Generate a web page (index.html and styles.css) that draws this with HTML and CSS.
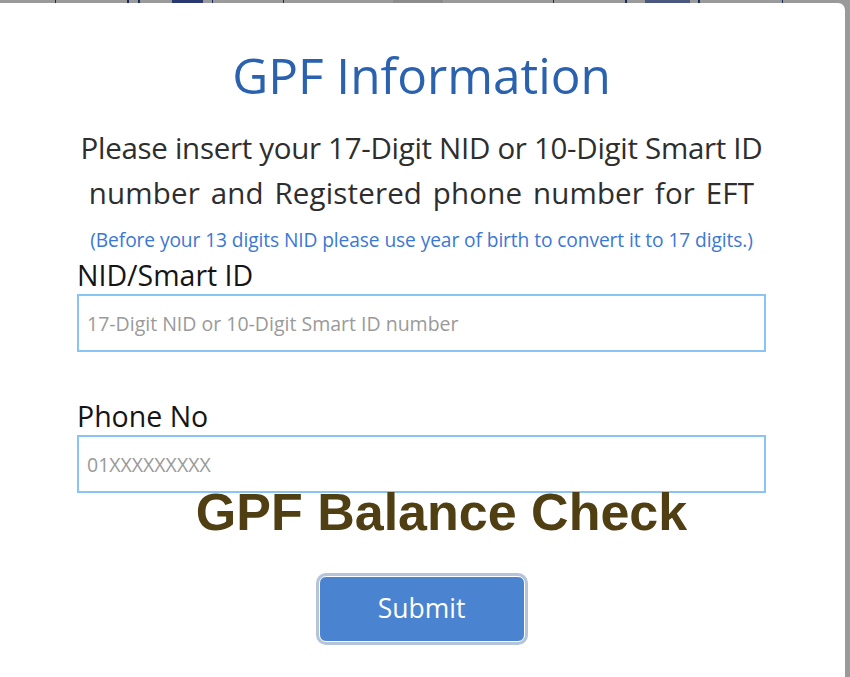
FILE: index.html
```html
<!DOCTYPE html>
<html>
<head>
<meta charset="utf-8">
<link rel="stylesheet" href="styles.css">
</head>
<body>
<div class="backdrop">
  <span class="mark m1"></span><span class="mark m2"></span><span class="mark m3"></span><span class="mark m4"></span><span class="mark m5"></span><span class="mark m6"></span><span class="mark m7"></span><span class="mark m8"></span><span class="mark m9"></span><span class="mark m10"></span><span class="mark m11"></span><span class="shade"></span>
</div>
<div class="modal">
  <h1 class="title">GPF Information</h1>
  <p class="intro">Please insert your 17-Digit NID or 10-Digit Smart ID <span class="intro-line2">number and Registered phone number for EFT</span></p>
  <p class="note">(Before your 13 digits NID please use year of birth to convert it to 17 digits.)</p>
  <label class="label">NID/Smart ID</label>
  <input class="field" type="text" placeholder="17-Digit NID or 10-Digit Smart ID number">
  <label class="label label-phone">Phone No</label>
  <input class="field" type="text" placeholder="01XXXXXXXXX">
  <div class="brand">GPF Balance Check</div>
  <div class="actions">
    <button class="submit">Submit</button>
  </div>
</div>
</body>
</html>
```
FILE: styles.css
```css
* { box-sizing: border-box; }
html, body {
  margin: 0;
  padding: 0;
  height: 677px;
  overflow: hidden;
  background: #9a9a9a;
  font-family: "Open Sans", "Noto Sans", sans-serif;
}
.backdrop {
  position: absolute;
  top: 0; left: 0; right: 0;
  height: 3px;
}
.mark {
  position: absolute;
  top: 0;
  width: 1px;
  height: 3px;
  background: #1b2a5e;
}
.shade {
  position: absolute;
  top: 0;
  left: 393px;
  width: 50px;
  height: 3px;
  background: #8c8c8c;
}
.m1 { left: 55px; }
.m2 { left: 127px; width: 2px; }
.m3 { left: 138px; width: 2px; }
.m4 { left: 172px; width: 31px; background: #2a3a70; }
.m5 { left: 212px; }
.m6 { left: 283px; }
.m7 { left: 553px; }
.m8 { left: 625px; width: 2px; }
.m9 { left: 645px; width: 45px; background: #4a5880; }
.m10 { left: 698px; width: 2px; }
.m11 { left: 782px; }
.modal {
  margin: 3px 5px 0 0;
  height: 674px;
  background: #fff;
  border-radius: 0 7px 0 0;
  padding: 41px 79px 0 77px;
  display: flex;
  flex-direction: column;
}
.title {
  margin: 0;
  text-align: center;
  font-weight: 400;
  font-size: 49.5px;
  line-height: 62px;
  color: #2b62b0;
}
.intro {
  margin: 19px 0 0;
  text-align: center;
  font-size: 29.5px;
  line-height: 45px;
  color: #2e2e2e;
  letter-spacing: -0.3px;
}
.intro-line2 {
  display: block;
  word-spacing: 3px;
  letter-spacing: 0.15px;
}
.note {
  margin: 12px 0 0;
  text-align: center;
  font-size: 19.2px;
  line-height: 26px;
  color: #3b78d4;
  letter-spacing: -0.1px;
}
.label {
  display: block;
  font-size: 28.5px;
  line-height: 36px;
  color: #151515;
  margin-top: 4px;
}
.field {
  display: block;
  width: 100%;
  height: 58px;
  margin: 1px 0 0;
  border: 2px solid #88c4f6;
  border-radius: 0;
  padding: 0 8px;
  font-family: inherit;
  font-size: 19.5px;
  color: #333;
  background: #fff;
  outline: none;
}
.label-phone { margin-top: 46px; }
.field::placeholder { color: #9a9a9a; }
.brand {
  margin-top: -7px;
  text-align: center;
  font-family: "Liberation Sans", Arial, sans-serif;
  font-weight: 700;
  font-size: 52px;
  line-height: 52px;
  color: #4f3f12;
  padding-left: 40px;
  position: relative;
}
.actions {
  display: flex;
  justify-content: center;
  margin-top: 38px;
}
.submit {
  width: 206px;
  height: 66px;
  border-radius: 7px;
  border: 1px solid #fff;
  box-shadow: 0 0 0 3px #b4c4d9;
  background: #4a84d0;
  color: #fff;
  font-family: inherit;
  font-size: 26.5px;
  padding: 0 0 3px;
}
```
